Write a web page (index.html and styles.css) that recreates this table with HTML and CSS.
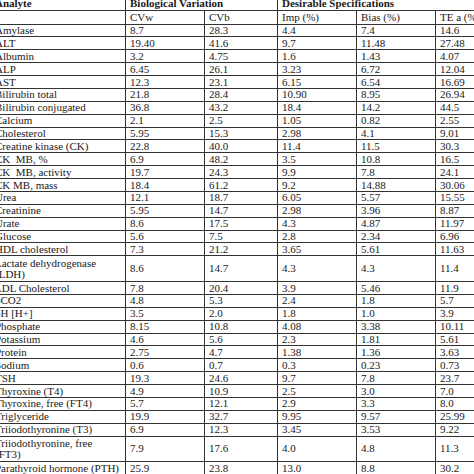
FILE: index.html
```html
<!DOCTYPE html>
<html>
<head>
<meta charset="utf-8">
<link rel="stylesheet" href="styles.css">
</head>
<body>
<div class="viewport">
<div class="sheet">
<table class="spec-table">
<colgroup>
<col class="c-analyte"><col class="c-num"><col class="c-num-b"><col class="c-num"><col class="c-num"><col class="c-num">
</colgroup>
<thead>
<tr class="head-1"><th>Analyte</th><th colspan="2">Biological Variation</th><th colspan="3">Desirable Specifications</th></tr>
<tr class="head-2"><td></td><td>CVw</td><td>CVb</td><td>Imp (%)</td><td>Bias (%)</td><td>TE a (%)</td></tr>
</thead>
<tbody>
<tr><td>Amylase</td><td>8.7</td><td>28.3</td><td>4.4</td><td>7.4</td><td>14.6</td></tr>
<tr><td>ALT</td><td>19.40</td><td>41.6</td><td>9.7</td><td>11.48</td><td>27.48</td></tr>
<tr><td>Albumin</td><td>3.2</td><td>4.75</td><td>1.6</td><td>1.43</td><td>4.07</td></tr>
<tr><td>ALP</td><td>6.45</td><td>26.1</td><td>3.23</td><td>6.72</td><td>12.04</td></tr>
<tr><td>AST</td><td>12.3</td><td>23.1</td><td>6.15</td><td>6.54</td><td>16.69</td></tr>
<tr><td>Bilirubin total</td><td>21.8</td><td>28.4</td><td>10.90</td><td>8.95</td><td>26.94</td></tr>
<tr><td>Bilirubin conjugated</td><td>36.8</td><td>43.2</td><td>18.4</td><td>14.2</td><td>44.5</td></tr>
<tr><td>Calcium</td><td>2.1</td><td>2.5</td><td>1.05</td><td>0.82</td><td>2.55</td></tr>
<tr><td>Cholesterol</td><td>5.95</td><td>15.3</td><td>2.98</td><td>4.1</td><td>9.01</td></tr>
<tr><td>Creatine kinase (CK)</td><td>22.8</td><td>40.0</td><td>11.4</td><td>11.5</td><td>30.3</td></tr>
<tr><td>CK&nbsp; MB, %</td><td>6.9</td><td>48.2</td><td>3.5</td><td>10.8</td><td>16.5</td></tr>
<tr><td>CK&nbsp; MB, activity</td><td>19.7</td><td>24.3</td><td>9.9</td><td>7.8</td><td>24.1</td></tr>
<tr><td>CK MB, mass</td><td>18.4</td><td>61.2</td><td>9.2</td><td>14.88</td><td>30.06</td></tr>
<tr><td>Urea</td><td>12.1</td><td>18.7</td><td>6.05</td><td>5.57</td><td>15.55</td></tr>
<tr><td>Creatinine</td><td>5.95</td><td>14.7</td><td>2.98</td><td>3.96</td><td>8.87</td></tr>
<tr><td>Urate</td><td>8.6</td><td>17.5</td><td>4.3</td><td>4.87</td><td>11.97</td></tr>
<tr><td>Glucose</td><td>5.6</td><td>7.5</td><td>2.8</td><td>2.34</td><td>6.96</td></tr>
<tr><td>HDL cholesterol</td><td>7.3</td><td>21.2</td><td>3.65</td><td>5.61</td><td>11.63</td></tr>
<tr class="double"><td>Lactate dehydrogenase<br>(LDH)</td><td>8.6</td><td>14.7</td><td>4.3</td><td>4.3</td><td>11.4</td></tr>
<tr><td>LDL Cholesterol</td><td>7.8</td><td>20.4</td><td>3.9</td><td>5.46</td><td>11.9</td></tr>
<tr><td>pCO2</td><td>4.8</td><td>5.3</td><td>2.4</td><td>1.8</td><td>5.7</td></tr>
<tr><td>pH [H+]</td><td>3.5</td><td>2.0</td><td>1.8</td><td>1.0</td><td>3.9</td></tr>
<tr><td>Phosphate</td><td>8.15</td><td>10.8</td><td>4.08</td><td>3.38</td><td>10.11</td></tr>
<tr><td>Potassium</td><td>4.6</td><td>5.6</td><td>2.3</td><td>1.81</td><td>5.61</td></tr>
<tr><td>Protein</td><td>2.75</td><td>4.7</td><td>1.38</td><td>1.36</td><td>3.63</td></tr>
<tr><td>Sodium</td><td>0.6</td><td>0.7</td><td>0.3</td><td>0.23</td><td>0.73</td></tr>
<tr><td>TSH</td><td>19.3</td><td>24.6</td><td>9.7</td><td>7.8</td><td>23.7</td></tr>
<tr><td>Thyroxine (T4)</td><td>4.9</td><td>10.9</td><td>2.5</td><td>3.0</td><td>7.0</td></tr>
<tr><td>Thyroxine, free (FT4)</td><td>5.7</td><td>12.1</td><td>2.9</td><td>3.3</td><td>8.0</td></tr>
<tr><td>Triglyceride</td><td>19.9</td><td>32.7</td><td>9.95</td><td>9.57</td><td>25.99</td></tr>
<tr><td>Triiodothyronine (T3)</td><td>6.9</td><td>12.3</td><td>3.45</td><td>3.53</td><td>9.22</td></tr>
<tr class="double"><td>Triiodothyronine, free<br>(FT3)</td><td>7.9</td><td>17.6</td><td>4.0</td><td>4.8</td><td>11.3</td></tr>
<tr><td>Parathyroid hormone (PTH)</td><td>25.9</td><td>23.8</td><td>13.0</td><td>8.8</td><td>30.2</td></tr>
</tbody>
</table>
</div>
</div>
</body>
</html>
```
FILE: styles.css
```css
html, body {
  margin: 0;
  padding: 0;
  background: #ffffff;
  overflow: hidden;
}

.viewport {
  width: 474px;
  height: 474px;
  overflow: hidden;
}

.sheet {
  margin: -4px 0 0 -10px;
}

.spec-table {
  border-collapse: collapse;
  table-layout: fixed;
  width: 524px;
  font-family: "Liberation Serif", "Times New Roman", serif;
  font-size: 11px;
  line-height: 11px;
  color: #1a1a1a;
}

.c-analyte { width: 135px; }
.c-num { width: 79px; }
.c-num-b { width: 73px; }

.spec-table th,
.spec-table td {
  border: 1px solid #333333;
  padding: 0 2px 0 4px;
  text-align: left;
  vertical-align: middle;
  white-space: nowrap;
  overflow: hidden;
}

.spec-table th {
  font-weight: bold;
}

.head-1, .head-2 {
  height: 13.8px;
}

.spec-table tbody tr {
  height: 12.88px;
}

.spec-table tbody tr.double {
  height: 25.76px;
}
```
